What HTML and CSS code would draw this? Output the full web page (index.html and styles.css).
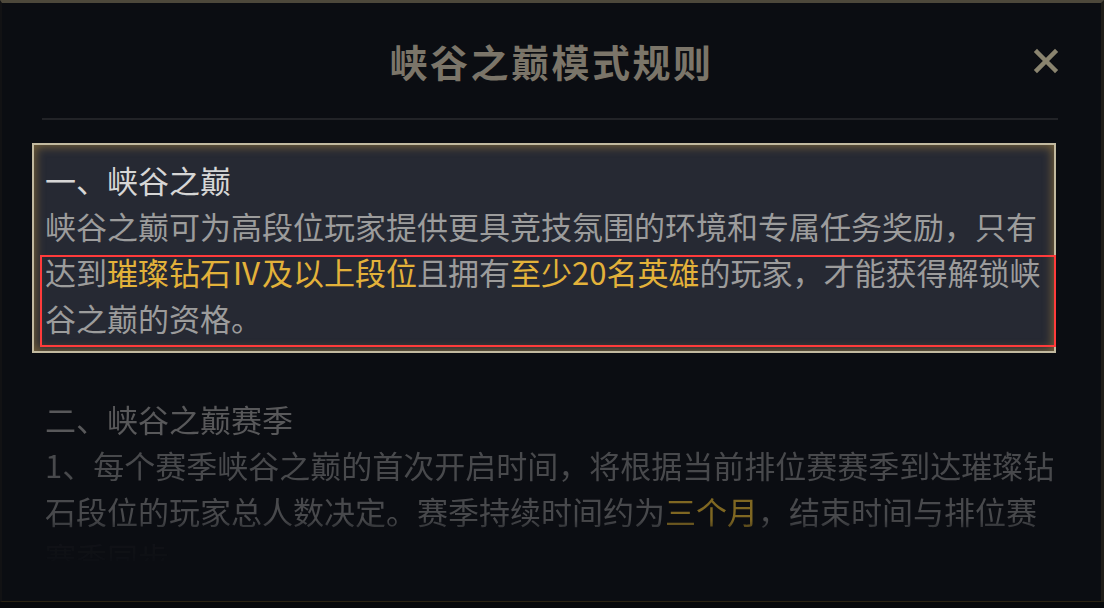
FILE: index.html
```html
<!DOCTYPE html>
<html lang="zh-CN">
<head>
    <meta charset="UTF-8">
    <title>峡谷之巅模式规则</title>
    <link rel="stylesheet" href="styles.css">
</head>
<body>
    <div class="panel">
        <div class="header">
            <div></div>
            <div class="title">峡谷之巅模式规则</div>
            <div class="close">
                <svg width="26" height="26" viewBox="0 0 26 26">
                    <path d="M4 4 L22 22 M22 4 L4 22" stroke="#8a846f" stroke-width="4.5" stroke-linecap="square"/>
                </svg>
            </div>
        </div>
        <div class="divider"></div>

        <div class="content">
            <div class="card">
                <div class="sec-title">一、峡谷之巅</div>
                <div class="sec-text">峡谷之巅可为高段位玩家提供更具竞技氛围的环境和专属任务奖励，只有达到<span class="gold">璀璨钻石Ⅳ及以上段位</span>且拥有<span class="gold">至少20名英雄</span>的玩家，才能获得解锁峡谷之巅的资格。</div>
                <div class="mark"></div>
            </div>

            <div class="section faded">
                <div class="sec-title">二、峡谷之巅赛季</div>
                <div class="sec-text">1、每个赛季峡谷之巅的首次开启时间，将根据当前排位赛赛季到达璀璨钻石段位的玩家总人数决定。赛季持续时间约为<span class="gold">三个月</span>，结束时间与排位赛赛季同步。</div>
            </div>
        </div>
    </div>
</body>
</html>
```

FILE: styles.css
```css
body {
    margin: 0;
    background: #07090c;
    font-family: "Noto Sans CJK SC", "Noto Sans", sans-serif;
    overflow: hidden;
}

.panel {
    width: 1104px;
    height: 602px;
    box-sizing: border-box;
    background: #0b0d12;
    border-top: 3px solid #4d483b;
    border-left: 2px solid #121214;
    border-right: 3px solid #1f1d18;
    border-bottom: 1px solid #2b2413;
    display: flex;
    flex-direction: column;
}

.header {
    height: 115px;
    display: grid;
    grid-template-columns: 1fr auto 1fr;
    align-items: center;
}

.title {
    font-size: 38px;
    font-weight: 700;
    color: #7b7569;
    letter-spacing: 2.5px;
    line-height: 1;
}

.close {
    justify-self: end;
    margin-right: 42px;
    height: 26px;
}

.divider {
    height: 2px;
    margin: 0 43px 0 40px;
    background: #222327;
}

.content {
    flex: 1;
    overflow: hidden;
    padding: 23px 45px 0 30px;
}

.card {
    position: relative;
    background: #262933;
    border: 2px solid #c2b99f;
    box-shadow: inset 0 0 10px 2px rgba(140, 112, 60, 0.75);
    padding: 12px 13px 10px 11px;
}

.sec-title {
    font-size: 31px;
    line-height: 46px;
    color: #d6d6d6;
}

.sec-text {
    font-size: 31px;
    line-height: 46px;
    color: #9c9c9c;
}

.gold {
    color: #e3b23a;
}

.mark {
    position: absolute;
    left: 6px;
    right: -2px;
    top: 110px;
    height: 88px;
    border: 2px solid #ff3b3b;
}

.section {
    padding: 43px 0 0 13px;
    height: 165px;
    -webkit-mask-image: linear-gradient(to bottom, #000 80%, rgba(0, 0, 0, 0.1) 90%, rgba(0, 0, 0, 0.04) 100%);
    mask-image: linear-gradient(to bottom, #000 80%, rgba(0, 0, 0, 0.1) 90%, rgba(0, 0, 0, 0.04) 100%);
    overflow: hidden;
}

.faded .sec-title {
    color: #58585a;
}

.faded .sec-text {
    color: #48494c;
}

.faded .gold {
    color: #7f6722;
}
```
